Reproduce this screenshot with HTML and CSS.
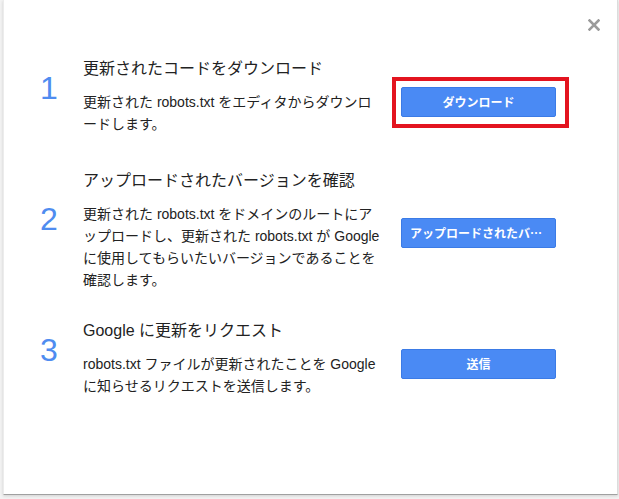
FILE: index.html
```html
<!DOCTYPE html>
<html lang="ja">
<head>
  <meta charset="UTF-8">
  <title>robots.txt を送信</title>
  <link rel="stylesheet" href="styles.css">
</head>
<body>
  <div class="dialog">
    <button class="close" aria-label="閉じる">
      <svg width="12" height="12" viewBox="0 0 12 12">
        <path d="M1.5 1.5 L10.5 10.5 M10.5 1.5 L1.5 10.5" stroke="#9a9a9a" stroke-width="2.6" stroke-linecap="square"/>
      </svg>
    </button>
    <div class="steps">
      <div class="step">
        <div class="num">1</div>
        <div class="content">
          <div class="title">更新されたコードをダウンロード</div>
          <div class="desc">更新された robots.txt をエディタからダウンロ<br>ードします。</div>
        </div>
        <div class="action highlight">
          <button class="blue-button">ダウンロード</button>
        </div>
      </div>
      <div class="step">
        <div class="num">2</div>
        <div class="content">
          <div class="title">アップロードされたバージョンを確認</div>
          <div class="desc">更新された robots.txt をドメインのルートにア<br>ップロードし、更新された robots.txt が Google<br>に使用してもらいたいバージョンであることを<br>確認します。</div>
        </div>
        <div class="action">
          <button class="blue-button">アップロードされたバージョンを確認</button>
        </div>
      </div>
      <div class="step">
        <div class="num">3</div>
        <div class="content">
          <div class="title">Google に更新をリクエスト</div>
          <div class="desc">robots.txt ファイルが更新されたことを Google<br>に知らせるリクエストを送信します。</div>
        </div>
        <div class="action">
          <button class="blue-button">送信</button>
        </div>
      </div>
    </div>
  </div>
  <div class="backdrop"></div>
</body>
</html>
```

FILE: styles.css
```css
body {
  margin: 0;
  background-color: #f3f3f3;
  font-family: "Liberation Sans", "Noto Sans CJK JP", sans-serif;
  color: #222;
}
.dialog {
  position: relative;
  height: 494px;
  margin: 0 1px 0 3px;
  background-color: #ffffff;
  border-left: 1px solid #ececec;
  border-right: 1px solid #dcdcdc;
  border-bottom: 1px solid #a0a0a0;
  box-shadow: 0 1px 3px rgba(0, 0, 0, 0.15);
}
.close {
  position: absolute;
  top: 18px;
  right: 16px;
  width: 14px;
  height: 14px;
  padding: 1px;
  border: none;
  background: none;
  cursor: pointer;
}
.close svg {
  display: block;
}
.steps {
  display: flex;
  flex-direction: column;
  gap: 28px;
  padding: 57px 0 0 36px;
}
.step {
  display: grid;
  grid-template-columns: 43px 318px 155px;
  min-height: 84px;
}
.num {
  align-self: center;
  margin-bottom: 22px;
  font-family: "Liberation Sans", sans-serif;
  font-size: 32px;
  line-height: 32px;
  color: #4f8cf0;
}
.content {
  align-self: start;
}
.title {
  margin-bottom: 10px;
  font-size: 16px;
  line-height: 24px;
  color: #222;
}
.desc {
  font-size: 14px;
  line-height: 22px;
  white-space: nowrap;
}
.action {
  position: relative;
  align-self: center;
  margin-top: 5px;
}
.highlight::after {
  content: "";
  position: absolute;
  top: -10px;
  left: -9px;
  right: -13px;
  bottom: -11px;
  border: 4px solid #e3141f;
}
.blue-button {
  display: block;
  width: 155px;
  height: 30px;
  padding: 0 8px;
  background-color: #4a8af4;
  border: 1px solid #3b7be6;
  border-radius: 2px;
  color: #ffffff;
  font-family: "Noto Sans CJK JP", sans-serif;
  font-size: 12px;
  font-weight: bold;
  white-space: nowrap;
  overflow: hidden;
  text-overflow: ellipsis;
  cursor: pointer;
}
.backdrop {
  height: 4px;
  background-color: #f3f3f3;
}
```
